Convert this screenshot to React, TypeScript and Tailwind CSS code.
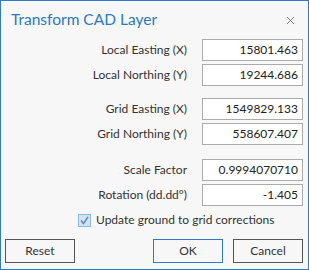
import { X } from "lucide-react";

const groups = [
  [
    { label: "Local Easting (X)", value: "15801.463" },
    { label: "Local Northing (Y)", value: "19244.686" },
  ],
  [
    { label: "Grid Easting (X)", value: "1549829.133" },
    { label: "Grid Northing (Y)", value: "558607.407" },
  ],
  [
    { label: "Scale Factor", value: "0.9994070710" },
    { label: "Rotation (dd.dd°)", value: "-1.405" },
  ],
];

function Field({ label, value }: { label: string; value: string }) {
  return (
    <div className="flex items-center justify-end gap-[15px] pr-[5px]">
      <span className="text-[12px] text-[#333]">{label}</span>
      <div className="w-[101px] h-[22px] border border-[#ababab] bg-white flex items-center justify-end pr-[4px] text-[12px] text-[#222]">
        {value}
      </div>
    </div>
  );
}

export default function App() {
  return (
    <div
      className="w-[309px] h-[270px] border border-[#2b7bd0] bg-[#f7f7f7] flex flex-col"
      style={{ fontFamily: "Lato, 'Open Sans', sans-serif" }}
    >
      <div className="h-[38px] flex items-center justify-between pl-[10px] pr-[11px]">
        <span className="text-[15.5px] text-[#2a79c2]">Transform CAD Layer</span>
        <X size={13} strokeWidth={1.6} className="text-[#6b6b6b]" />
      </div>

      <div className="flex flex-col">
        {groups.map((g, i) => (
          <div
            key={i}
            className={`flex flex-col gap-[3px] ${i === 1 ? "mt-[12px]" : ""} ${i === 2 ? "mt-[14px]" : ""}`}
          >
            {g.map((f) => (
              <Field key={f.label} {...f} />
            ))}
          </div>
        ))}
      </div>

      <div className="flex items-center gap-[5px] pl-[77px] mt-[7px] h-[14px]">
        <div className="w-[13px] h-[13px] border border-[#8fb8e4] bg-[#cfe3f7] flex items-center justify-center">
          <svg width="11" height="11" viewBox="0 0 11 11" fill="none">
            <path d="M2 5.5 L4.5 8.5 L9 2" stroke="#6c8aa6" strokeWidth="1.5" />
          </svg>
        </div>
        <span className="text-[12px] text-[#333]">Update ground to grid corrections</span>
      </div>

      <div className="flex items-center pl-[4px] pr-[5px] mt-[12px]">
        <button className="w-[70px] h-[24px] border border-[#555] bg-[#f7f7f7] text-[12px] text-[#333]">
          Reset
        </button>
        <button className="ml-auto w-[70px] h-[24px] border border-[#2b7bd0] bg-[#f7f7f7] text-[12px] text-[#333]">
          OK
        </button>
        <button className="ml-[10px] w-[70px] h-[24px] border border-[#555] bg-[#f7f7f7] text-[12px] text-[#333]">
          Cancel
        </button>
      </div>
    </div>
  );
}
